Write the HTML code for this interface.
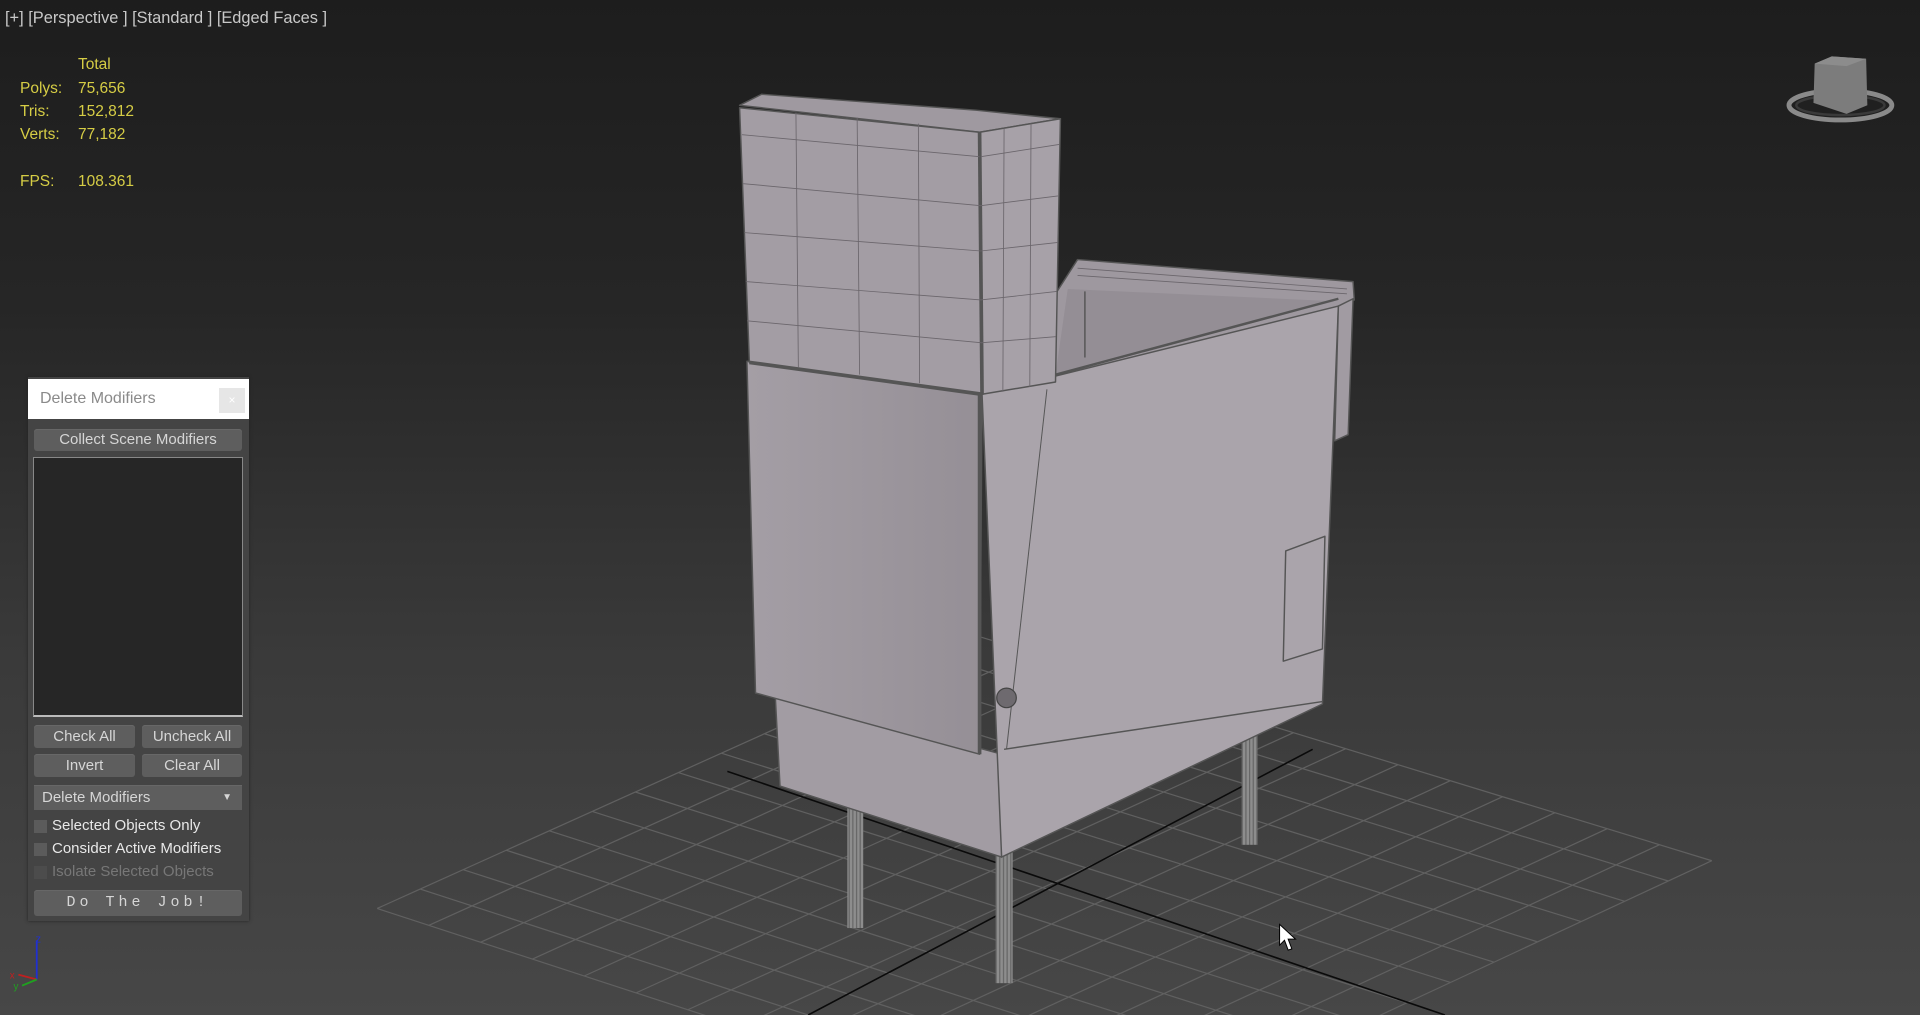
<!DOCTYPE html>
<html><head><meta charset="utf-8"><style>
html,body{margin:0;padding:0;width:1920px;height:1015px;overflow:hidden;background:#2a2a2a;font-family:"Liberation Sans",sans-serif}
#bg{position:absolute;left:0;top:0;width:1920px;height:1015px;background:linear-gradient(#1d1d1d 0%,#262626 30%,#3a3a3a 65%,#474747 100%)}
svg.scene{position:absolute;left:0;top:0}
.hdr{position:absolute;left:5px;top:9px;color:#c9c9c9;font-size:16.4px;white-space:pre}
.st{position:absolute;color:#d6cd45;font-size:15.5px}
.panel{position:absolute;left:28px;top:377px;width:221px;height:544px;background:#444;box-shadow:0 0 3px #222}
.title{position:absolute;left:0;top:2px;width:221px;height:40px;background:#fff;color:#8a8a8a;font-size:16px;line-height:40px;text-indent:12px}
.xb{position:absolute;right:4px;top:9px;width:26px;height:25px;background:#e6e6e6;color:#fff;font-size:12px;text-align:center;line-height:25px;text-indent:0}
.btn{position:absolute;background:#5e5e5e;border-radius:3px;color:#d6d6d6;font-size:15px;text-align:center;box-shadow:inset 0 1px 0 #676767}
.list{position:absolute;left:5px;top:80px;width:208px;height:257px;background:#262626;border:1px solid #888;border-bottom:2px solid #bbb}
.cb{position:absolute;left:6px;width:13px;height:13px;background:#5b5b5b}
.cl{position:absolute;left:24px;font-size:15px;color:#e8e8e8}
</style></head><body>
<div id="bg"></div>
<svg class="scene" width="1920" height="1015" viewBox="0 0 1568 829" preserveAspectRatio="none">
<defs>
<linearGradient id="lf" x1="0" y1="0" x2="1" y2="0"><stop offset="0" stop-color="#a49ea5"/><stop offset="1" stop-color="#958f96"/></linearGradient>
<pattern id="leg" width="3" height="4" patternUnits="userSpaceOnUse"><rect width="3" height="4" fill="#8d8d8d"/><rect width="1" height="4" fill="#666"/></pattern>
</defs>
<g id="grid" stroke="#606060" stroke-width="1" fill="none"></g>
<line x1="594" y1="630" x2="1180" y2="829" stroke="#0a0a0a" stroke-width="1.3"/>
<line x1="1072" y1="612" x2="660" y2="829" stroke="#0a0a0a" stroke-width="1.3"/>
<rect x="692" y="655" width="13" height="103" fill="url(#leg)"/>
<rect x="813" y="695" width="14" height="108" fill="url(#leg)"/>
<rect x="1014" y="598" width="13" height="92" fill="url(#leg)"/>
<g stroke="#555" stroke-width="1.2" stroke-linejoin="round">
<polygon points="633,566 818,616 818,700 637,642" fill="#a29ca3"/>
<polygon points="610,295 802,322 800,616 617,566" fill="url(#lf)"/>
<polygon points="862,240 880,212 1105,230 1106,245 1093,252 862,312" fill="#9e989f"/>
<polygon points="872,236 1090,246 862,306" fill="#948e95" stroke="none"/>
<line x1="886" y1="238" x2="886" y2="292"/>
<polygon points="802,322 1093,250 1080,575 818,700" fill="#aaa4ab"/>
<line x1="862" y1="306" x2="1093" y2="244" stroke-width="2"/>
<line x1="820" y1="612" x2="1080" y2="573"/>
<line x1="855" y1="318" x2="822" y2="612" stroke-width="0.8"/>
<polygon points="1093,250 1105,244 1101,355 1090,360" fill="#a19ba2"/>
<polygon points="604,86 622,77 797,90 866,97 800,108" fill="#9f99a0"/>
<polygon points="604,88 800,108 802,322 612,296" fill="#a39da4"/>
<polygon points="800,108 866,97 862,312 802,322" fill="#a7a1a8"/>
<line x1="800" y1="108" x2="802" y2="322" stroke-width="3"/>
<line x1="800" y1="322" x2="800" y2="616" stroke-width="3"/>
<line x1="612" y1="296" x2="802" y2="322" stroke-width="3"/>
<polygon points="1050,450 1082,438 1080,530 1048,540" fill="none"/>
</g>
<g stroke="#6b666c" stroke-width="0.7" fill="none">
<path d="M606,110 L800,128 M607,150 L801,168 M608,190 L801,205 M609,230 L801,245 M610,262 L802,280 M801,128 L865,118 M801,168 L864,160 M801,205 L864,198 M801,245 L863,238 M801,280 L862,275"/>
<path d="M650,92 L652,300 M700,96 L702,306 M750,101 L751,313 M820,105 L819,320 M842,101 L841,316"/>
<path d="M880,225 L1100,240 M880,219 L1100,236"/>
</g>
<circle cx="822" cy="570" r="8" fill="#6e6a6f" stroke="#444"/>
<ellipse cx="1503" cy="86" rx="42" ry="12" fill="none" stroke="#8a8a8a" stroke-width="4"/>
<ellipse cx="1503" cy="86" rx="36" ry="8" fill="none" stroke="#3a3a3a" stroke-width="2"/>
<polygon points="1482,52 1496,46 1524,48 1525,86 1508,93 1481,84" fill="#7c7c7c"/>
<polygon points="1482,52 1496,46 1524,48 1508,54" fill="#8c8c8c"/>
<line x1="30" y1="800" x2="30" y2="768" stroke="#2030d0" stroke-width="1.5"/>
<text x="29" y="770" fill="#2030d0" font-size="9" font-family="Liberation Sans">z</text>
<line x1="30" y1="800" x2="15" y2="796" stroke="#c02020" stroke-width="1.5"/>
<text x="8" y="799" fill="#c02020" font-size="8" font-family="Liberation Sans">x</text>
<line x1="30" y1="800" x2="18" y2="805" stroke="#20a020" stroke-width="1.5"/>
<text x="11" y="808" fill="#20a020" font-size="8" font-family="Liberation Sans">y</text>
<path d="M1045,755 L1045,772 L1049,768 L1052,776 L1055,775 L1052,767 L1058,767 Z" fill="#fff" stroke="#000" stroke-width="0.8"/>
</svg>
<div class="hdr">[+] [Perspective ] [Standard ] [Edged Faces ]</div>
<div class="st" style="left:78px;top:56px">Total</div>
<div class="st" style="left:20px;top:80px">Polys:</div><div class="st" style="left:78px;top:80px">75,656</div>
<div class="st" style="left:20px;top:103px">Tris:</div><div class="st" style="left:78px;top:103px">152,812</div>
<div class="st" style="left:20px;top:126px">Verts:</div><div class="st" style="left:78px;top:126px">77,182</div>
<div class="st" style="left:20px;top:173px">FPS:</div><div class="st" style="left:78px;top:173px">108.361</div>
<div class="panel">
<div class="title">Delete Modifiers<div class="xb">×</div></div>
<div class="btn" style="left:6px;top:52px;width:208px;height:22px;line-height:22px">Collect Scene Modifiers</div>
<div class="list"></div>
<div class="btn" style="left:6px;top:348px;width:101px;height:23px;line-height:23px">Check All</div>
<div class="btn" style="left:114px;top:348px;width:100px;height:23px;line-height:23px">Uncheck All</div>
<div class="btn" style="left:6px;top:377px;width:101px;height:23px;line-height:23px">Invert</div>
<div class="btn" style="left:114px;top:377px;width:100px;height:23px;line-height:23px">Clear All</div>
<div class="btn" style="left:6px;top:408px;width:208px;height:25px;line-height:25px;text-align:left;text-indent:8px;border-radius:0">Delete Modifiers<span style="position:absolute;right:10px;font-size:10px">▼</span></div>
<div class="cb" style="top:443px"></div><div class="cl" style="top:440px">Selected Objects Only</div>
<div class="cb" style="top:466px"></div><div class="cl" style="top:463px">Consider Active Modifiers</div>
<div class="cb" style="top:489px;background:#4c4c4c"></div><div class="cl" style="top:486px;color:#777">Isolate Selected Objects</div>
<div class="btn" style="left:6px;top:513px;width:208px;height:26px;line-height:26px;font-family:'Liberation Mono',monospace;letter-spacing:4px;font-size:15px">Do The Job!</div>
</div>
<script>
(function(){
var L=[308,742],T=[800,520],R=[1398,703],B=[900,935],N=14,g=document.getElementById('grid'),s='';
function lerp(a,b,t){return [a[0]+(b[0]-a[0])*t,a[1]+(b[1]-a[1])*t];}
for(var i=0;i<=N;i++){var t=i/N;
var a=lerp(L,T,t),b=lerp(B,R,t);s+='M'+a[0]+','+a[1]+'L'+b[0]+','+b[1];
var c=lerp(L,B,t),d=lerp(T,R,t);s+='M'+c[0]+','+c[1]+'L'+d[0]+','+d[1];}
var p=document.createElementNS('http://www.w3.org/2000/svg','path');p.setAttribute('d',s);g.appendChild(p);
})();
</script>
</body></html>
